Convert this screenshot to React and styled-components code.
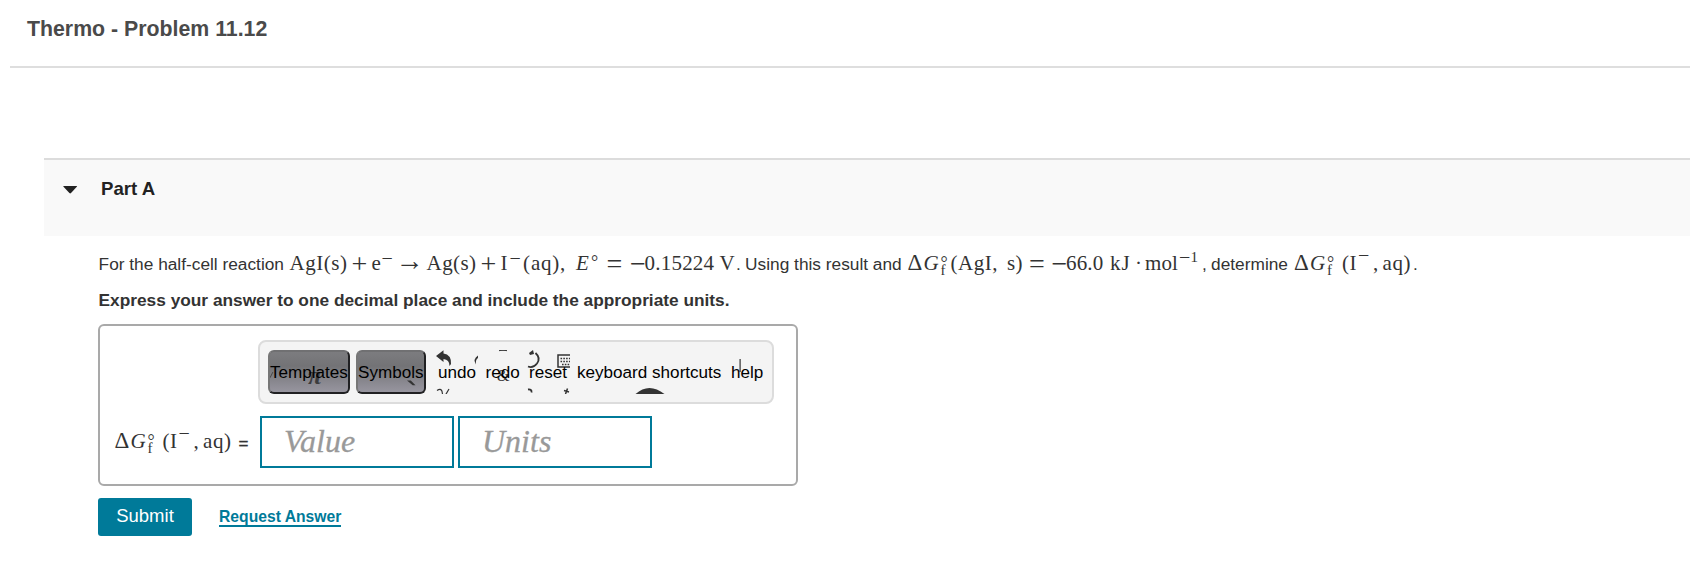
import styled, { createGlobalStyle } from "styled-components";

const GlobalStyle = createGlobalStyle`
  body {
    margin: 0;
    background: #fff;
    color: #333;
    font-family: "Liberation Sans", Arial, sans-serif;
    font-size: 17.3px;
    overflow: hidden;
  }
  * {
    box-sizing: border-box;
  }
`;

const Page = styled.main`
  width: 1690px;
  height: 586px;
  overflow: hidden;
`;

const Header = styled.header`
  height: 68px;
  margin-left: 10px;
  padding: 14px 0 0 17px;
  border-bottom: 2px solid #dedede;
`;

const Title = styled.h1`
  margin: 0;
  font-size: 21.3px;
  line-height: 30px;
  color: #4a4a4a;
`;

const PartBar = styled.div`
  display: flex;
  align-items: flex-start;
  height: 78px;
  margin: 90px 0 0 44px;
  padding: 16px 0 0 19px;
  background: #f9f9f9;
  border-top: 2px solid #dcdcdc;
`;

const Arrow = styled.svg`
  width: 15px;
  height: 9px;
  margin: 9px 23px 0 0;
  fill: #222;
`;

const PartName = styled.h2`
  margin: 0;
  font-size: 18.6px;
  line-height: 26px;
  color: #222;
`;

const Content = styled.section`
  padding: 13px 0 0 98px;
`;

const Problem = styled.p`
  margin: 0;
  padding-left: 0.6px;
  height: 30px;
  line-height: 30px;
  white-space: nowrap;
`;

const Instructions = styled.p`
  margin: 6px 0 9px;
  padding-left: 0.6px;
  line-height: 30px;
  font-size: 17.3px;
  font-weight: bold;
  white-space: nowrap;
`;

const Piece = styled.span`
  display: inline-block;
  width: ${({ $w }) => $w}px;
  white-space: pre;
`;

const Math = styled(Piece)`
  font-family: "Liberation Serif", "Times New Roman", serif;
  font-size: 21px;
  font-style: ${({ $italic }) => ($italic ? "italic" : "normal")};
  letter-spacing: ${({ $ls }) => $ls || 0}px;
  line-height: 0;
`;

const Operator = styled(Math)`
  font-size: 28px;
  vertical-align: -2.5px;
`;

const ReactionArrow = styled(Math)`
  font-size: 28px;
  text-indent: -3px;
  vertical-align: 0.5px;
`;

const Delta = styled(Math)`
  font-size: 23px;
`;

const Script = styled(Math)`
  font-size: ${({ $size }) => $size || 15}px;
  vertical-align: ${({ $up }) => $up}px;
`;

const AnswerBox = styled.div`
  width: 700px;
  height: 162px;
  padding: 14px 0 0 14px;
  border: 2px solid #a9a9a9;
  border-radius: 6px;
`;

const Toolbar = styled.div`
  display: flex;
  width: 516px;
  height: 64px;
  margin-left: 144px;
  padding: 8px;
  background: #f4f4f4;
  border: 2px solid #dcdcdc;
  border-radius: 8px;
  color: #000;
`;

const Tool = styled.div`
  position: relative;
  flex: none;
  width: ${({ $w }) => $w}px;
  height: 44px;
  margin-right: ${({ $gap }) => $gap || 0}px;
  padding-left: ${({ $pad }) => $pad || 0}px;
  font-size: 17.1px;
  line-height: 46px;
  white-space: nowrap;
`;

const MenuTool = styled(Tool)`
  border: 2px solid;
  border-color: #707072 #202022 #202022 #777;
  border-radius: 6px;
  background: linear-gradient(#7c7c7f, #737376 35%, #97959f);
  line-height: 42px;
`;

const ToolLabel = styled.span`
  position: relative;
`;

// Leftover sprite glyphs showing through behind the labels
const Sprite = styled.svg`
  position: absolute;
  inset: 0;
  width: 100%;
  height: 44px;
  fill: #333;
  stroke: none;
  overflow: hidden;
  font-family: "Liberation Serif", serif;
`;

const AnswerRow = styled.div`
  display: flex;
  margin-top: 12px;
  height: 52px;
`;

const AnswerLabel = styled.div`
  width: 146px;
  padding-left: 0.5px;
  line-height: 52px;
  white-space: nowrap;
`;

const Equals = styled(Piece)`
  font-size: 17px;
  line-height: 0;
  vertical-align: -1px;
  -webkit-text-stroke: 0.3px #333;
`;

const Field = styled.input`
  width: 194px;
  height: 52px;
  margin-right: 4px;
  padding: 0 0 1px 22px;
  border: 2px solid #007a99;
  background: #fff;
  font: italic 32px "Liberation Serif", "Times New Roman", serif;
  outline: none;
  &::placeholder {
    color: #999;
    opacity: 1;
    -webkit-text-stroke: 0.3px #999;
  }
`;

const Actions = styled.div`
  display: flex;
  align-items: center;
  margin-top: 12px;
`;

const Submit = styled.button`
  width: 94px;
  height: 38px;
  padding: 0 0 3px;
  border: 0;
  border-radius: 3px;
  background: #007a99;
  color: #fff;
  font: 18.5px "Liberation Sans", Arial, sans-serif;
`;

const RequestLink = styled.a`
  margin: 1px 0 0 27px;
  color: #007a99;
  border-bottom: 2px solid #007a99;
  font-size: 15.7px;
  font-weight: bold;
  line-height: 16px;
`;

const GibbsIodide = ({ tail = 0 }) => (
  <>
    <Delta $w={16}>Δ</Delta>
    <Math $w={17} $italic>G</Math>
    <Script $w={0} $up={1.5} $size={18}>°</Script>
    <Script $w={15} $up={-5}>f</Script>
    <Math $w={16} $ls={0.5}>(I</Math>
    <Script $w={15} $up={8} $size={20}>−</Script>
    <Math $w={9.5}>,</Math>
    <Math $w={29.5 + tail} $ls={0.6}>aq)</Math>
  </>
);

const App = () => {
  return (
    <Page>
      <GlobalStyle />
      <Header>
        <Title>Thermo - Problem 11.12</Title>
      </Header>
      <PartBar>
        <Arrow viewBox="0 0 15 9">
          <path d="M0.7 1H13.6Q14.5 1 13.8 1.8L8 8Q7.2 8.8 6.4 8L.5 1.8Q0 1 .7 1Z" />
        </Arrow>
        <PartName>Part A</PartName>
      </PartBar>
      <Content>
        <Problem>
          <Piece $w={191}>For the half-cell reaction</Piece>
          <Math $w={62} $ls={0.5}>AgI(s)</Math>
          <Operator $w={20}>+</Operator>
          <Math $w={10}>e</Math>
          <Script $w={17} $up={5} $size={20}>−</Script>
          <ReactionArrow $w={28}>→</ReactionArrow>
          <Math $w={54} $ls={0.4}>Ag(s)</Math>
          <Operator $w={20}>+</Operator>
          <Math $w={9}>I</Math>
          <Script $w={13.5} $up={5} $size={20}>−</Script>
          <Math $w={53} $ls={0.8}>(aq),</Math>
          <Math $w={15} $italic>E</Math>
          <Script $w={15.5} $up={2.5} $size={18}>°</Script>
          <Operator $w={23.5}>=</Operator>
          <Operator $w={14.5}>−</Operator>
          <Math $w={75} $ls={0.2}>0.15224</Math>
          <Math $w={16.5}>V</Math>
          <Piece $w={9}>.</Piece>
          <Piece $w={162.5}>Using this result and</Piece>
          <Delta $w={16}>Δ</Delta>
          <Math $w={17} $italic>G</Math>
          <Script $w={0} $up={1.5} $size={18}>°</Script>
          <Script $w={10} $up={-5}>f</Script>
          <Math $w={56.5} $ls={0.5}>(AgI,</Math>
          <Math $w={22} $ls={0.3}>s)</Math>
          <Operator $w={22.5}>=</Operator>
          <Operator $w={14.5}>−</Operator>
          <Math $w={44} $ls={0.1}>66.0</Math>
          <Math $w={25} $ls={0.8}>kJ</Math>
          <Math $w={10}>·</Math>
          <Math $w={34}>mol</Math>
          <Script $w={11.5} $up={6} $size={20}>−</Script>
          <Script $w={11.5} $up={8.5}>1</Script>
          <Piece $w={9}>,</Piece>
          <Piece $w={83}>determine</Piece>
          <GibbsIodide tail={1} />
          <Piece $w={6}>.</Piece>
        </Problem>
        <Instructions>
          Express your answer to one decimal place and include the appropriate units.
        </Instructions>
        <AnswerBox>
          <Toolbar>
            <MenuTool $w={82} $gap={6}>
              <Sprite viewBox="0 0 82 44">
                <text x="40" y="32" fontSize="27" fontStyle="italic" fontWeight="bold" fill="#3c3c3e">π</text>
                <path d="M0 26L3 20" stroke="#444" strokeWidth="1" />
              </Sprite>
              <ToolLabel>Templates</ToolLabel>
            </MenuTool>
            <MenuTool $w={70} $gap={8}>
              <Sprite viewBox="0 0 70 44">
                <path d="M52 29h4l5 5h-3z" />
              </Sprite>
              <ToolLabel>Symbols</ToolLabel>
            </MenuTool>
            <Tool $w={46} $gap={2} $pad={4}>
              <Sprite viewBox="0 0 46 44">
                <path d="M2 6L9.5.2V3.4Q17.5 4.5 17 14L15.5 16Q15.5 9.5 9.5 9V12Z" />
                <path d="M44 5.5Q38.5 9 42 14.5Q41.3 9.5 44 8Z" />
                <path d="M3 40.5Q8 37 8.5 44M15 39L11.5 45" fill="none" stroke="#333" strokeWidth="1.2" />
              </Sprite>
              <ToolLabel>undo</ToolLabel>
            </Tool>
            <Tool $w={43} $gap={2} $pad={3.5}>
              <Sprite viewBox="0 0 43 44">
                <path d="M17 .7Q21 -.7 25 .7" stroke="#333" strokeWidth="1" />
                <text x="15" y="31" fontSize="16" fill="#333">&amp;</text>
              </Sprite>
              <ToolLabel>redo</ToolLabel>
            </Tool>
            <Tool $w={43} $gap={2} $pad={2}>
              <Sprite viewBox="0 0 43 44">
                <path d="M2 3L6 0L7 4L3 5Z" />
                <path d="M8.5 3Q14 8 10 13.5Q6 18.5 1 16.5" fill="none" stroke="#333" strokeWidth="1.8" />
                <path d="M1 39.5Q5 39 4.5 42.5" fill="none" stroke="#333" strokeWidth="1.8" />
                <path d="M37 40.5L42 42M40.5 38.5L38.5 44" stroke="#333" strokeWidth="1.5" />
                <path d="M43 5H31V17H43" fill="none" stroke="#333" strokeWidth="1.5" />
                <path d="M33.5 8.5H43M33.5 11.5H43M35 14.5H43" stroke="#333" strokeWidth="1.4" strokeDasharray="1.6 1.2" />
              </Sprite>
              <ToolLabel>reset</ToolLabel>
            </Tool>
            <Tool $w={151} $gap={3} $pad={5}>
              <Sprite viewBox="0 0 151 44">
                <path d="M63.5 44Q77 32 92.5 44Z" />
              </Sprite>
              <ToolLabel>keyboard shortcuts</ToolLabel>
            </Tool>
            <Tool $w={38} $pad={5}>
              <Sprite viewBox="0 0 38 44">
                <path d="M13.5 9h1.2v13h-1.2z" />
              </Sprite>
              <ToolLabel>help</ToolLabel>
            </Tool>
          </Toolbar>
          <AnswerRow>
            <AnswerLabel>
              <GibbsIodide tail={6} />
              <Equals $w={12}>=</Equals>
            </AnswerLabel>
            <Field placeholder="Value" />
            <Field placeholder="Units" />
          </AnswerRow>
        </AnswerBox>
        <Actions>
          <Submit>Submit</Submit>
          <RequestLink>Request Answer</RequestLink>
        </Actions>
      </Content>
    </Page>
  );
};

export default App;
